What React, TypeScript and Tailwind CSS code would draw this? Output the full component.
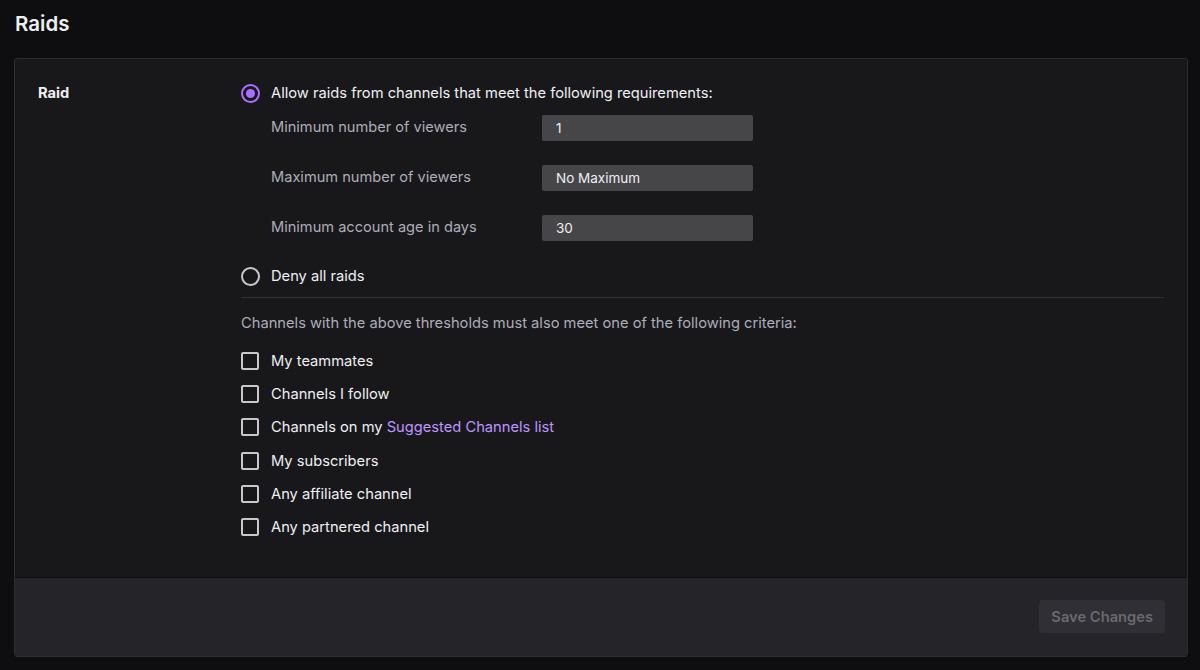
import { useState } from "react";

const criteria: { id: string; label: string; link?: string }[] = [
  { id: "teammates", label: "My teammates" },
  { id: "follow", label: "Channels I follow" },
  { id: "suggested", label: "Channels on my ", link: "Suggested Channels list" },
  { id: "subscribers", label: "My subscribers" },
  { id: "affiliate", label: "Any affiliate channel" },
  { id: "partnered", label: "Any partnered channel" },
];

const thresholds = [
  { id: "min", label: "Minimum number of viewers", value: "1" },
  { id: "max", label: "Maximum number of viewers", value: "No Maximum" },
  { id: "age", label: "Minimum account age in days", value: "30" },
];

function Radio({ checked }: { checked: boolean }) {
  return (
    <span
      className={`flex size-[19px] shrink-0 items-center justify-center rounded-full border-2 ${
        checked ? "border-[#a970ff]" : "border-[#c8c8cc]"
      }`}
    >
      {checked && <span className="size-[9px] rounded-full bg-[#a970ff]" />}
    </span>
  );
}

export default function App() {
  const [mode, setMode] = useState<"allow" | "deny">("allow");
  const [checked, setChecked] = useState<Record<string, boolean>>({});

  return (
    <div
      className="min-h-[670px] bg-[#0e0e10] px-[14px] pt-[10px] text-[#efeff1]"
      style={{ fontFamily: "Inter, 'Noto Sans', sans-serif" }}
    >
      <h1 className="text-[20.5px] font-semibold leading-[28px] pl-px">Raids</h1>

      <div className="mt-[20px] w-[1174px] overflow-hidden rounded-[3px] border border-[#2c2c31] bg-[#18181b]">
        <div className="flex px-[23px] pt-[23px] pb-[39px]">
          <div className="w-[203px] shrink-0 text-[14.7px] font-bold leading-[22px]">
            Raid
          </div>

          <div className="flex-1">
            <button
              type="button"
              onClick={() => setMode("allow")}
              className="flex items-center gap-[11px] text-[14.7px] leading-[22px]"
            >
              <Radio checked={mode === "allow"} />
              Allow raids from channels that meet the following requirements:
            </button>

            <div className="mt-[11px] flex flex-col gap-[24px] pl-[30px]">
              {thresholds.map((t) => (
                <div key={t.id} className="flex items-center">
                  <label className="w-[271px] text-[14.6px] text-[#adadb8]">
                    {t.label}
                  </label>
                  <input
                    defaultValue={t.value}
                    className="h-[26px] w-[211px] rounded-[2px] bg-[#464649] px-[14px] text-[13.5px] text-[#efeff1] outline-none"
                  />
                </div>
              ))}
            </div>

            <button
              type="button"
              onClick={() => setMode("deny")}
              className="mt-[24px] flex items-center gap-[11px] text-[14.7px] leading-[22px]"
            >
              <Radio checked={mode === "deny"} />
              Deny all raids
            </button>

            <div className="mt-[10px] h-px bg-[#2f2f35]" />

            <p className="mt-[14px] text-[14.7px] leading-[22px] text-[#adadb8]">
              Channels with the above thresholds must also meet one of the following criteria:
            </p>

            <div className="mt-[16px] flex flex-col gap-[11.2px]">
              {criteria.map((c) => (
                <label
                  key={c.id}
                  className="flex cursor-pointer items-center gap-[12px] text-[14.7px] leading-[22px]"
                  onClick={() =>
                    setChecked((prev) => ({ ...prev, [c.id]: !prev[c.id] }))
                  }
                >
                  <span
                    className={`size-[18px] shrink-0 rounded-[2px] border-2 ${
                      checked[c.id]
                        ? "border-[#a970ff] bg-[#a970ff]"
                        : "border-[#c8c8cc]"
                    }`}
                  />
                  <span>
                    {c.label}
                    {c.link && <span className="text-[#bf94ff]">{c.link}</span>}
                  </span>
                </label>
              ))}
            </div>
          </div>
        </div>

        <div className="flex h-[79px] items-center justify-end border-t border-[#0e0e10] bg-[#242429] px-[22px]">
          <button
            type="button"
            disabled
            className="h-[33px] rounded-[4px] bg-[#2f2f35] px-[12px] text-[14.7px] font-semibold text-[#69696e]"
          >
            Save Changes
          </button>
        </div>
      </div>
    </div>
  );
}
